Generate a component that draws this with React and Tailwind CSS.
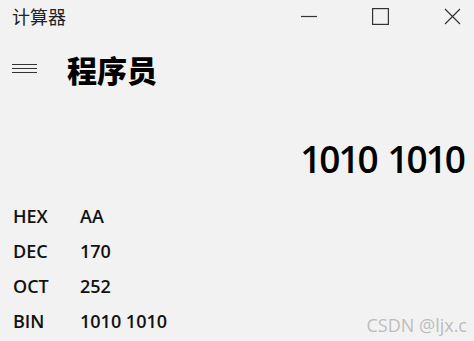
const sans = { fontFamily: '"Open Sans", "Noto Sans CJK SC", sans-serif' };

const rows = [
  { label: "HEX", value: "AA" },
  { label: "DEC", value: "170" },
  { label: "OCT", value: "252" },
  { label: "BIN", value: "1010 1010" },
];

const App = () => {
  return (
    <div
      className="relative w-[474px] h-[341px] overflow-hidden bg-[#f2f2f2] text-[#111] flex flex-col"
      style={sans}
    >
      {/* title bar */}
      <div className="h-8 flex items-center justify-between pl-3 pr-[13px] shrink-0">
        <span className="text-[18px] leading-none text-[#222] font-['Noto_Sans_CJK_SC',sans-serif]">计算器</span>
        <div className="flex items-center gap-[55px]">
          <svg width="16" height="16" viewBox="0 0 16 16">
            <line x1="0" y1="8.5" x2="16" y2="8.5" stroke="#333" strokeWidth="1.2" />
          </svg>
          <svg width="17" height="17" viewBox="0 0 17 17">
            <rect x="0.6" y="0.6" width="15.8" height="15.8" fill="none" stroke="#333" strokeWidth="1.2" />
          </svg>
          <svg width="17" height="17" viewBox="0 0 17 17">
            <path d="M1 1 L16 16 M16 1 L1 16" stroke="#333" strokeWidth="1.2" />
          </svg>
        </div>
      </div>

      {/* header */}
      <div className="h-[74px] flex items-center pl-3 shrink-0">
        <svg width="25" height="10" viewBox="0 0 25 10" className="shrink-0">
          <path d="M0 0.5 H25 M0 4.5 H25 M0 8.5 H25" stroke="#333" strokeWidth="1" />
        </svg>
        <h1 className="ml-[30px] text-[30px] leading-none font-black text-black font-['Noto_Sans_CJK_SC',sans-serif]">
          程序员
        </h1>
      </div>

      {/* display */}
      <div className="mt-[34px] pr-[10px] text-right text-[37px] leading-none font-semibold tracking-[-2px] [word-spacing:3px] text-black">
        1010 1010
      </div>

      {/* radix list */}
      <div className="mt-[22px] flex flex-col pl-[13px]">
        {rows.map((r) => (
          <div key={r.label} className="h-[35px] flex items-center text-[18px] font-semibold">
            <span className="w-[67px]">{r.label}</span>
            <span>{r.value}</span>
          </div>
        ))}
      </div>

      <span className="absolute right-[7px] bottom-[7px] text-[18px] leading-none text-[#bdbdbd]">
        CSDN @ljx.c
      </span>
    </div>
  );
};

export default App;
